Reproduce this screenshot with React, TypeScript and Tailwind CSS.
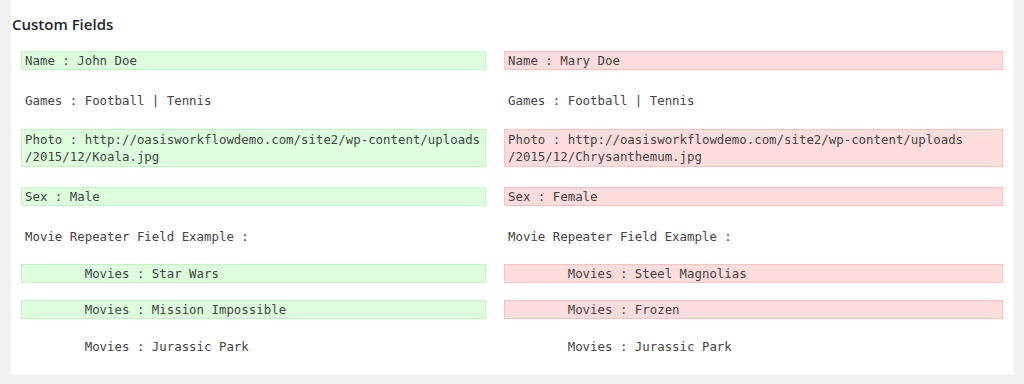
import React from "react";

type Tone = "add" | "del" | "none";

interface Row {
  mt: number;
  left: string[];
  right: string[];
  leftTone: Tone;
  rightTone: Tone;
}

const ROWS: Row[] = [
  { mt: 0, left: ["Name : John Doe"], right: ["Name : Mary Doe"], leftTone: "add", rightTone: "del" },
  { mt: 21, left: ["Games : Football | Tennis"], right: ["Games : Football | Tennis"], leftTone: "none", rightTone: "none" },
  {
    mt: 19,
    left: ["Photo : http://oasisworkflowdemo.com/site2/wp-content/uploads", "/2015/12/Koala.jpg"],
    right: ["Photo : http://oasisworkflowdemo.com/site2/wp-content/uploads", "/2015/12/Chrysanthemum.jpg"],
    leftTone: "add",
    rightTone: "del",
  },
  { mt: 20, left: ["Sex : Male"], right: ["Sex : Female"], leftTone: "add", rightTone: "del" },
  { mt: 21, left: ["Movie Repeater Field Example :"], right: ["Movie Repeater Field Example :"], leftTone: "none", rightTone: "none" },
  { mt: 18, left: ["        Movies : Star Wars"], right: ["        Movies : Steel Magnolias"], leftTone: "add", rightTone: "del" },
  { mt: 17, left: ["        Movies : Mission Impossible"], right: ["        Movies : Frozen"], leftTone: "add", rightTone: "del" },
  { mt: 18, left: ["        Movies : Jurassic Park"], right: ["        Movies : Jurassic Park"], leftTone: "none", rightTone: "none" },
];

function Cell({ lines, tone }: { lines: string[]; tone: Tone }) {
  const toneClass =
    tone === "add"
      ? "bg-[#ddffdd] border-[#c2f5c2]"
      : tone === "del"
        ? "bg-[#ffdddd] border-[#ffc0c0]"
        : "bg-transparent border-transparent";
  return (
    <div
      className={`border pl-[3px] whitespace-pre text-[#444] ${
        lines.length > 1 ? "leading-[17px] pt-[1px] pb-[1px]" : "leading-[16px] pt-[1px]"
      } ${toneClass}`}
    >
      {lines.map((l, i) => (
        <div key={i}>{l}</div>
      ))}
    </div>
  );
}

export default function App() {
  return (
    <div className="w-[1024px] h-[384px] bg-[#f1f1f1] pl-[11px] pr-[10px] overflow-hidden">
      <div className="bg-white h-[375px] pl-[1px]">
        {/* Heading */}
        <h2
          className="pt-[14px] text-[15px] leading-[20px] font-semibold text-[#23282d]"
          style={{ fontFamily: '"Open Sans", "Noto Sans", sans-serif' }}
        >
          Custom Fields
        </h2>

        {/* Diff rows */}
        <div
          className="mt-[17px] ml-[9px] flex flex-col text-[12.4px]"
          style={{ fontFamily: '"DejaVu Sans Mono", "Liberation Mono", monospace' }}
        >
          {ROWS.map((row, i) => (
            <div
              key={i}
              className="grid grid-cols-[465px_499px] gap-x-[18px]"
              style={{ marginTop: row.mt }}
            >
              <Cell lines={row.left} tone={row.leftTone} />
              <Cell lines={row.right} tone={row.rightTone} />
            </div>
          ))}
        </div>
      </div>
    </div>
  );
}
